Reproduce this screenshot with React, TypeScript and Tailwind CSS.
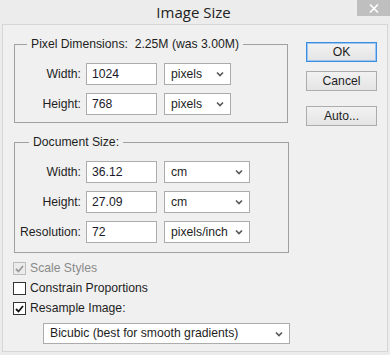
import React from 'react';

const Chevron: React.FC = () => (
  <svg width="8" height="6" viewBox="0 0 8 6" className="shrink-0">
    <path d="M1 1.5 L4 4.5 L7 1.5" fill="none" stroke="#5a5a5a" strokeWidth="1.7" />
  </svg>
);

const Field: React.FC<{ label: string; value: string; unit: string; selectW: string }> = ({ label, value, unit, selectW }) => (
  <div className="flex items-center h-[22px]">
    <span className="w-[67px] text-right pr-[1px]">{label}</span>
    <div className="ml-[4px] w-[71px] h-[22px] border border-[#acacac] bg-white flex items-center pl-[5px] text-[#1a1a2a]">
      {value}
    </div>
    <div className={`ml-[7px] ${selectW} h-[22px] border border-[#acacac] bg-white flex items-center justify-between pl-[6px] pr-[6px]`}>
      <span>{unit}</span>
      <Chevron />
    </div>
  </div>
);

const Check: React.FC<{ checked?: boolean; disabled?: boolean }> = ({ checked, disabled }) => (
  <div
    className={`w-[13px] h-[13px] border flex items-center justify-center shrink-0 ${
      disabled ? 'border-[#bcbcbc] bg-[#ebebeb]' : 'border-[#333333] bg-white'
    }`}
  >
    {checked && (
      <svg width="9" height="8" viewBox="0 0 9 8">
        <path d="M1 4 L3.5 6.5 L8 1" fill="none" stroke={disabled ? '#9a9a9a' : '#111111'} strokeWidth="1.8" />
      </svg>
    )}
  </div>
);

const Button: React.FC<{ children: React.ReactNode; primary?: boolean }> = ({ children, primary }) => (
  <div
    className={`w-[71px] h-[20px] flex items-center justify-center bg-gradient-to-b from-[#f2f2f2] to-[#e4e4e4] border ${
      primary ? 'border-[#3c8fe0] shadow-[inset_0_0_0_1px_#9cc6ef]' : 'border-[#acacac]'
    }`}
  >
    {children}
  </div>
);

export default function App() {
  return (
    <div
      className="w-[390px] h-[355px] bg-[#ececec] text-[12.2px] text-[#1e1e1e] overflow-hidden"
      style={{ fontFamily: '"Liberation Sans", Arial, sans-serif' }}
    >
      <div className="h-[24px] flex items-start">
        <div className="flex-1 h-[24px] flex items-center justify-center pl-[30px] text-[15px] text-[#222]" style={{ fontFamily: '"Open Sans", "Noto Sans", sans-serif' }}>
          Image Size
        </div>
        <div className="w-[33px] h-[16px] bg-[#bfbfbf] flex items-center justify-center">
          <svg width="10" height="9" viewBox="0 0 10 9">
            <path d="M1 0.5 L9 8.5 M9 0.5 L1 8.5" stroke="#ffffff" strokeWidth="1.6" />
          </svg>
        </div>
      </div>

      <div className="ml-[2px] w-[386px] h-[328px] border border-[#d6d6d6] bg-[#f0f0f0]">
        <div className="flex">
          <div className="pl-[11px] pt-[19px]">
            <div className="relative w-[274px] h-[79px] border border-[#a0a0a0] pt-[18px] flex flex-col gap-[8px]">
              <span className="absolute left-[12px] -top-[9px] px-[4px] bg-[#f0f0f0] leading-[16px]">
                Pixel Dimensions:&nbsp; 2.25M (was 3.00M)
              </span>
              <Field label="Width:" value="1024" unit="pixels" selectW="w-[67px]" />
              <Field label="Height:" value="768" unit="pixels" selectW="w-[67px]" />
            </div>

            <div className="relative mt-[19px] w-[275px] h-[111px] border border-[#a0a0a0] pt-[18px] flex flex-col gap-[8px]">
              <span className="absolute left-[14px] -top-[9px] px-[4px] bg-[#f0f0f0] leading-[16px]">Document Size:</span>
              <Field label="Width:" value="36.12" unit="cm" selectW="w-[86px]" />
              <Field label="Height:" value="27.09" unit="cm" selectW="w-[86px]" />
              <Field label="Resolution:" value="72" unit="pixels/inch" selectW="w-[86px]" />
            </div>
          </div>

          <div className="ml-[17px] pt-[17px] flex flex-col">
            <Button primary>OK</Button>
            <div className="mt-[9px]">
              <Button>Cancel</Button>
            </div>
            <div className="mt-[15px]">
              <Button>Auto...</Button>
            </div>
          </div>
        </div>

        <div className="pl-[10px] pt-[9px] flex flex-col gap-[7px]">
          <div className="flex items-center gap-[3px] h-[13px] text-[#8a8a8a]">
            <Check checked disabled />
            <span className="ml-[1px]">Scale Styles</span>
          </div>
          <div className="flex items-center gap-[3px] h-[13px]">
            <Check />
            <span className="ml-[1px]">Constrain Proportions</span>
          </div>
          <div className="flex items-center gap-[3px] h-[13px]">
            <Check checked />
            <span className="ml-[1px]">Resample Image:</span>
          </div>
          <div className="ml-[30px] mt-[1px] w-[247px] h-[21px] border border-[#acacac] bg-white flex items-center justify-between pl-[6px] pr-[6px]">
            <span>Bicubic (best for smooth gradients)</span>
            <Chevron />
          </div>
        </div>
      </div>
    </div>
  );
}
